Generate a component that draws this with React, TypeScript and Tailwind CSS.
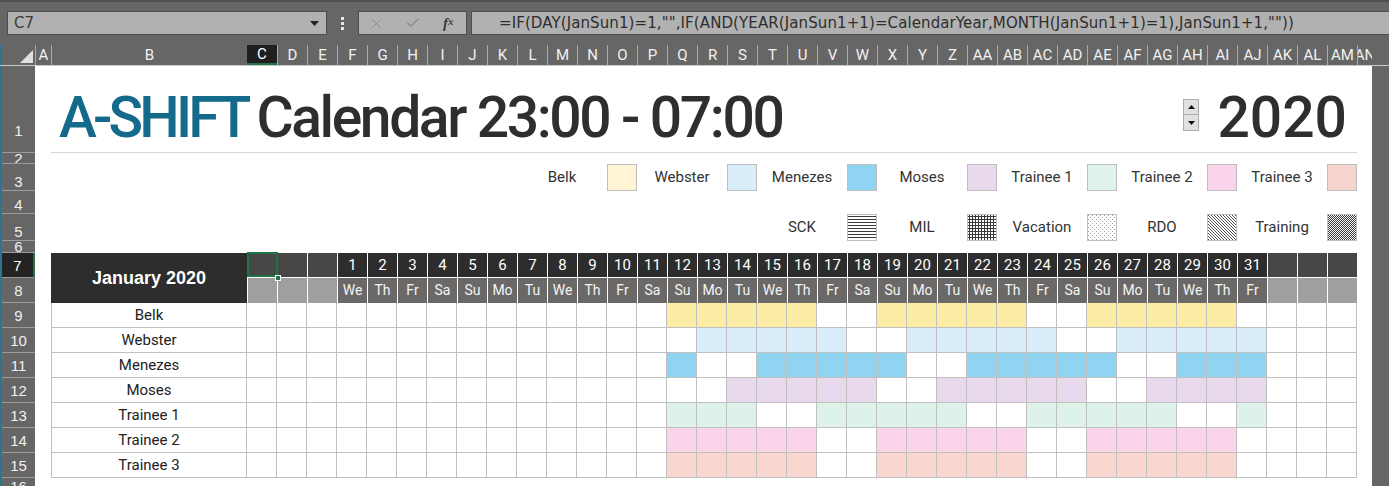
import { Check, X } from "lucide-react";

const L = "ABCDEFGHIJKLMNOPQRSTUVWXYZ";
const colLetters: string[] = [...L.split(""), ..."ABCDEFGHIJKLMN".split("").map((c) => "A" + c)];

const colWidth = (i: number) =>
  i === 0 ? "w-[16px]" : i === 1 ? "w-[196px]" : i === 39 ? "w-[15px]" : "w-[30px]";

const range = (a: number, b: number) => Array.from({ length: b - a + 1 }, (_, i) => a + i);

const belkDays = [...range(12, 16), ...range(19, 23), ...range(26, 30)];

const people = [
  { name: "Belk", bg: "bg-[#fdeca6]", days: belkDays },
  { name: "Webster", bg: "bg-[#d9edf8]", days: [...range(13, 17), ...range(20, 24), ...range(27, 31)] },
  { name: "Menezes", bg: "bg-[#8fd4f1]", days: [12, ...range(15, 19), ...range(22, 26), ...range(29, 31)] },
  { name: "Moses", bg: "bg-[#e8d9ed]", days: [...range(14, 18), ...range(21, 25), ...range(28, 31)] },
  { name: "Trainee 1", bg: "bg-[#dff2ea]", days: [...range(12, 14), ...range(17, 21), ...range(24, 28), 31] },
  { name: "Trainee 2", bg: "bg-[#fad5ea]", days: belkDays },
  { name: "Trainee 3", bg: "bg-[#f8d6cf]", days: belkDays },
];

const weekdays = ["Su", "Mo", "Tu", "We", "Th", "Fr", "Sa"];

const rowHeads: [string, string][] = [
  ["1", "h-[87px] items-end pb-[13px]"],
  ["2", "h-[11px] items-center"],
  ["3", "h-[27px] items-end"],
  ["4", "h-[23px] items-end"],
  ["5", "h-[27px] items-end"],
  ["6", "h-[12px] items-center"],
  ["7", "h-[25px] items-center"],
  ["8", "h-[25px] items-center"],
  ["9", "h-[25px] items-center"],
  ["10", "h-[25px] items-center"],
  ["11", "h-[25px] items-center"],
  ["12", "h-[25px] items-center"],
  ["13", "h-[25px] items-center"],
  ["14", "h-[25px] items-center"],
  ["15", "h-[25px] items-center"],
  ["16", "h-[25px] items-start"],
];

const legend = [
  { label: "Belk", text: "col-[12/15]", box: "col-[15] bg-[#fff5d4]" },
  { label: "Webster", text: "col-[16/19]", box: "col-[19] bg-[#d9edf8]" },
  { label: "Menezes", text: "col-[20/23]", box: "col-[23] bg-[#8fd4f1]" },
  { label: "Moses", text: "col-[24/27]", box: "col-[27] bg-[#e9d9ec]" },
  { label: "Trainee 1", text: "col-[28/31]", box: "col-[31] bg-[#dff3eb]" },
  { label: "Trainee 2", text: "col-[32/35]", box: "col-[35] bg-[#fad4ea]" },
  { label: "Trainee 3", text: "col-[36/39]", box: "col-[39] bg-[#f7d5cf]" },
];

// hatch fills for the absence legend (SCK, MIL, Vacation, RDO, Training)
function Pattern({ id, kind }: { id: string; kind: string }) {
  const size = kind === "dots" ? 4 : kind === "check" ? 2 : 3;
  return (
    <svg width="28" height="25" className="block">
      <defs>
        <pattern id={id} width={size} height={size} patternUnits="userSpaceOnUse">
          {kind === "hlines" && <rect x="0" y="1" width="3" height="1" fill="#3a3a3a" />}
          {kind === "grid" && (
            <>
              <rect x="0" y="1" width="3" height="1" fill="#3a3a3a" />
              <rect x="1" y="0" width="1" height="3" fill="#3a3a3a" />
            </>
          )}
          {kind === "dots" && (
            <>
              <rect x="0" y="0" width="1" height="1" fill="#9a9a9a" />
              <rect x="2" y="2" width="1" height="1" fill="#9a9a9a" />
            </>
          )}
          {kind === "diag" && (
            <>
              <rect x="0" y="0" width="1" height="1" fill="#555" />
              <rect x="1" y="1" width="1" height="1" fill="#555" />
              <rect x="2" y="2" width="1" height="1" fill="#555" />
            </>
          )}
          {kind === "check" && (
            <>
              <rect x="0" y="0" width="1" height="1" fill="#333" />
              <rect x="1" y="1" width="1" height="1" fill="#333" />
            </>
          )}
        </pattern>
      </defs>
      <rect width="28" height="25" fill="#fff" />
      <rect width="28" height="25" fill={`url(#${id})`} />
    </svg>
  );
}

const patterns = [
  { label: "SCK", text: "col-[20/23]", box: "col-[23]", kind: "hlines" },
  { label: "MIL", text: "col-[24/27]", box: "col-[27]", kind: "grid" },
  { label: "Vacation", text: "col-[28/31]", box: "col-[31]", kind: "dots" },
  { label: "RDO", text: "col-[32/35]", box: "col-[35]", kind: "diag" },
  { label: "Training", text: "col-[36/39]", box: "col-[39]", kind: "check" },
];

const body = "font-['Roboto',sans-serif]";

function Toolbar() {
  return (
    <div className="h-[45px] border-t-2 border-[#505050] flex items-start pt-[9px]">
      <div className="ml-[7px] w-[320px] h-[24px] bg-[#b1b1b1] border border-[#4c4c4c] flex items-center justify-between pl-[6px] pr-[7px]">
        <span className="font-['DejaVu_Sans',sans-serif] text-[15px] text-[#3a3a3a]">C7</span>
        <svg width="9" height="5" viewBox="0 0 9 5">
          <polygon points="0,0 9,0 4.5,5" fill="#222" />
        </svg>
      </div>
      <div className="w-[31px] h-[24px] flex flex-col items-center justify-center gap-[2px]">
        <div className="w-[3px] h-[3px] bg-[#e6e6e6]" />
        <div className="w-[3px] h-[3px] bg-[#e6e6e6]" />
        <div className="w-[3px] h-[3px] bg-[#e6e6e6]" />
      </div>
      <div className="w-[109px] h-[24px] bg-[#b1b1b1] border border-[#4c4c4c] flex items-center">
        <div className="w-[36px] flex justify-center">
          <X size={15} strokeWidth={1.5} color="#8c8c8c" />
        </div>
        <div className="w-[36px] flex justify-center">
          <Check size={16} strokeWidth={2} color="#8c8c8c" />
        </div>
        <div className="w-[36px] flex justify-center font-['Liberation_Serif',serif] italic font-bold text-[15px] text-[#3c3c3c] leading-none">
          f<span className="text-[11px]">x</span>
        </div>
      </div>
      <div className="ml-[4px] flex-1 h-[24px] bg-[#b1b1b1] border-y border-l border-[#4c4c4c] flex items-center pl-[27px]">
        <span className="font-['DejaVu_Sans',sans-serif] text-[15px] tracking-[0.1px] text-[#2e2e2e] whitespace-nowrap">
          =IF(DAY(JanSun1)=1,"",IF(AND(YEAR(JanSun1+1)=CalendarYear,MONTH(JanSun1+1)=1),JanSun1+1,""))
        </span>
      </div>
    </div>
  );
}

function ColumnHeaders() {
  return (
    <div className="flex h-[21px] border-b border-[#c8c8c8]">
      <div className="w-[35px] h-full flex items-end justify-end pr-[2px] pb-[2px] border-l-2 border-[#2f7391]">
        <svg width="13" height="13" viewBox="0 0 13 13">
          <polygon points="13,0 13,13 0,13" fill="#e0e0e0" />
        </svg>
      </div>
      {colLetters.map((c, i) => (
        <div
          key={c}
          className={`${colWidth(i)} shrink-0 h-full flex items-center justify-center overflow-hidden text-[15px] ${body} ${
            i === 2 ? "bg-[#1f1f1f] text-white border-b-2 border-[#217346]" : "text-[#f2f2f2] border-l border-[#a9a9a9]"
          }`}
        >
          {c}
        </div>
      ))}
    </div>
  );
}

function RowHeaders() {
  return (
    <div className="w-[35px] shrink-0 flex flex-col border-l-2 border-[#2f7391]">
      {rowHeads.map(([n, cls]) => (
        <div
          key={n}
          className={`${cls} shrink-0 flex justify-center overflow-hidden border-b border-[#9a9a9a] text-[15px] leading-[17px] font-['Liberation_Sans',sans-serif] ${
            n === "7" ? "bg-[#232323] text-white border-r-2 border-r-[#217346]" : "text-[#f0f0f0]"
          }`}
        >
          {n}
        </div>
      ))}
    </div>
  );
}

function TopSection() {
  return (
    <div className="grid grid-cols-[16px_196px_repeat(37,30px)_15px] grid-rows-[87px_11px_27px_23px_27px_12px]">
      <div className="col-[2/34] row-[1] pl-[8px] pt-[23px] leading-none whitespace-nowrap font-['Roboto',sans-serif] font-medium text-[57px]">
        <span className="text-[#136a8a] tracking-[-3.8px]">A-SHIFT </span>
        <span className="text-[#2e2e2e] tracking-[-2.4px]">Calendar 23:00 - 07:00</span>
      </div>
      <div className="col-[2/40] row-[1] self-end border-b border-[#d6d6d6]" />
      <div className="col-[34/40] row-[1] flex items-start pt-[33px] pl-[6px]">
        <div className="flex flex-col">
          <div className="w-[16px] h-[16px] bg-[#e1e1e1] border border-[#adadad] flex items-center justify-center">
            <svg width="7" height="4" viewBox="0 0 7 4">
              <polygon points="0,4 7,4 3.5,0" fill="#111" />
            </svg>
          </div>
          <div className="w-[16px] h-[16px] bg-[#e1e1e1] border border-[#adadad] border-t-0 flex items-center justify-center">
            <svg width="7" height="4" viewBox="0 0 7 4">
              <polygon points="0,0 7,0 3.5,4" fill="#111" />
            </svg>
          </div>
        </div>
      </div>
      <div className="col-[35/40] row-[1] flex justify-end pr-[10px] pt-[23px] leading-none">
        <span className="font-['Roboto',sans-serif] text-[57px] font-medium text-[#2e2e2e]">2020</span>
      </div>

      {legend.map((l) => (
        <div key={l.label} className="contents">
          <div className={`${l.text} row-[3] flex items-center justify-center ${body} text-[15px] text-[#333]`}>{l.label}</div>
          <div className={`${l.box} row-[3] border border-[#bfbfbf]`} />
        </div>
      ))}

      {patterns.map((p) => (
        <div key={p.label} className="contents">
          <div className={`${p.text} row-[5] flex items-center justify-center ${body} text-[15px] text-[#333]`}>{p.label}</div>
          <div className={`${p.box} row-[5] border border-[#bfbfbf] overflow-hidden`}>
            <Pattern id={`pat-${p.kind}`} kind={p.kind} />
          </div>
        </div>
      ))}
    </div>
  );
}

function Calendar() {
  const extra = [3, 4, 5, 37, 38, 39];
  const cols = Array.from({ length: 38 }, (_, i) => i + 3);
  return (
    <div className="grid grid-cols-[16px_196px_repeat(37,30px)_15px] grid-rows-[repeat(9,25px)_10px]">
      {/* row 7 */}
      <div />
      <div className="row-span-2 bg-[#2d2d2d] flex items-center justify-center text-white font-bold text-[18px] font-['Liberation_Sans',sans-serif]">
        January 2020
      </div>
      {cols.map((c) => {
        if (c === 40) return <div key={c} />;
        const day = c - 5;
        if (extra.includes(c))
          return (
            <div key={c} className="relative bg-[#474747] border-l border-b border-white">
              {c === 3 && (
                <>
                  <div className="absolute -left-px -top-px w-[31px] h-[25px] border-2 border-[#217346] z-10" />
                  <div className="absolute right-[-4px] bottom-[-4px] w-[6px] h-[6px] bg-[#217346] border border-white z-20" />
                </>
              )}
            </div>
          );
        return (
          <div key={c} className={`bg-[#2d2d2d] border-l border-b border-white flex items-center justify-center text-white text-[15px] ${body}`}>
            {day}
          </div>
        );
      })}
      {/* row 8 */}
      <div />
      {cols.map((c) => {
        if (c === 40) return <div key={c} />;
        const day = c - 5;
        if (extra.includes(c)) return <div key={c} className="bg-[#a09e9e] border-l border-white" />;
        return (
          <div key={c} className={`bg-[#6b6868] border-l border-white flex items-center justify-center text-[#f4f4f4] text-[14px] ${body}`}>
            {weekdays[(day + 2) % 7]}
          </div>
        );
      })}
      {/* people */}
      {people.map((p) => (
        <div key={p.name} className="contents">
          <div />
          <div className={`border-l border-r border-b border-[#c0c0c0] flex items-center justify-center text-[15px] text-[#222] ${body}`}>
            {p.name}
          </div>
          {cols.map((c) => {
            if (c === 40) return <div key={c} />;
            const day = c - 5;
            const on = day >= 1 && day <= 31 && p.days.includes(day);
            return <div key={c} className={`border-r border-b border-[#c0c0c0] ${on ? p.bg : "bg-white"}`} />;
          })}
        </div>
      ))}
    </div>
  );
}

export default function App() {
  return (
    <div className="w-[1389px] h-[486px] overflow-hidden bg-[#666666] select-none">
      <Toolbar />
      <ColumnHeaders />
      <div className="flex">
        <RowHeaders />
        <div className="w-[1337px] shrink-0 bg-white">
          <TopSection />
          <Calendar />
        </div>
      </div>
    </div>
  );
}
